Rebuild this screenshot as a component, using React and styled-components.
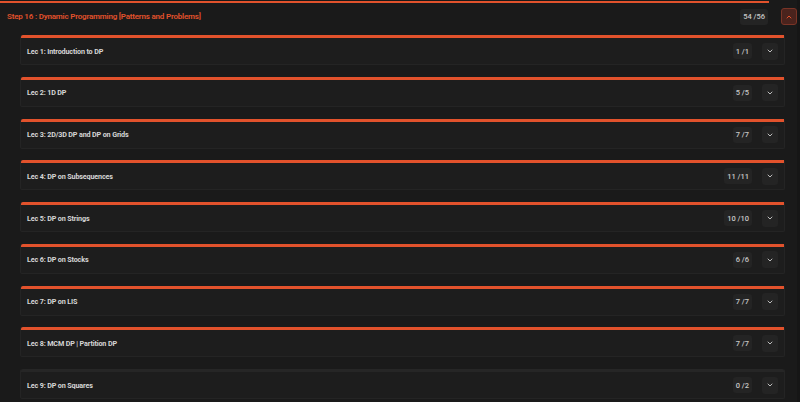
import React from "react";
import styled, { createGlobalStyle } from "styled-components";

const GlobalStyle = createGlobalStyle`
  html, body {
    margin: 0;
    padding: 0;
    background: #161616;
  }
  body {
    font-family: "Liberation Sans Narrow", "Roboto", sans-serif;
  }
`;

const ORANGE = "#e2522c";

const Section = styled.section`
  width: 797px;
  height: 402px;
  background: #1a1a1a;
  overflow: hidden;
`;

const Progress = styled.div`
  height: 3px;
  padding-top: 1px;
  box-sizing: border-box;
`;

const ProgressFill = styled.div`
  height: 2px;
  background: ${ORANGE};
`;

const Header = styled.div`
  display: flex;
  align-items: center;
  height: 27px;
  padding: 0 0 0 7px;
`;

const Title = styled.h2`
  flex: 1;
  margin: 0;
  font-size: 8px;
  font-weight: 600;
  color: ${ORANGE};
  letter-spacing: -0.2px;
`;

const Count = styled.span`
  display: inline-flex;
  align-items: center;
  justify-content: center;
  height: 16px;
  padding: 0 3px;
  border-radius: 3px;
  background: #242424;
  color: #c8c8c8;
  font-size: 7.5px;
  font-weight: 500;
`;

const Toggle = styled.button`
  display: inline-flex;
  align-items: center;
  justify-content: center;
  width: 16px;
  height: 17px;
  padding: 0;
  margin-left: ${(p) => p.$gap}px;
  border-radius: 3px;
  border: 1px solid ${(p) => (p.$open ? "#7a3426" : "transparent")};
  background: ${(p) => (p.$open ? "#4a231d" : "#242424")};
  color: ${(p) => (p.$open ? ORANGE : "#bdbdbd")};
`;

const List = styled.div`
  display: flex;
  flex-direction: column;
  gap: 11.75px;
  padding: 5px 12px 0 20px;
`;

const Card = styled.div`
  height: 30px;
  box-sizing: border-box;
  background: #1d1d1d;
  border: 1px solid #242424;
  border-top: none;
  border-radius: 2px;
  display: flex;
  flex-direction: column;
`;

const Bar = styled.div`
  height: 3px;
  background: #262626;
  border-radius: 2px 2px 0 0;
`;

const BarFill = styled.div`
  height: 100%;
  background: ${ORANGE};
  border-radius: 2px 0 0 0;
`;

const Row = styled.div`
  flex: 1;
  display: flex;
  align-items: center;
  padding: 0 6px 0 6px;
`;

const Name = styled.span`
  flex: 1;
  font-size: 7.2px;
  font-weight: 700;
  color: #d6d6d6;
  letter-spacing: -0.15px;
`;

const Chevron = ({ up }) => (
  <svg width="8" height="8" viewBox="0 0 24 24" fill="none" stroke="currentColor" strokeWidth="3" strokeLinecap="round" strokeLinejoin="round">
    <path d={up ? "M6 15l6-6 6 6" : "M6 9l6 6 6-6"} />
  </svg>
);

const lectures = [
  ["Lec 1: Introduction to DP", 1, 1],
  ["Lec 2: 1D DP", 5, 5],
  ["Lec 3: 2D/3D DP and DP on Grids", 7, 7],
  ["Lec 4: DP on Subsequences", 11, 11],
  ["Lec 5: DP on Strings", 10, 10],
  ["Lec 6: DP on Stocks", 6, 6],
  ["Lec 7: DP on LIS", 7, 7],
  ["Lec 8: MCM DP | Partition DP", 7, 7],
  ["Lec 9: DP on Squares", 0, 2],
];

export default function App() {
  return (
    <>
      <GlobalStyle />
      <Section>
        <Progress>
          <ProgressFill style={{ width: `${(54 / 56) * 100}%` }} />
        </Progress>
        <Header>
          <Title>Step 16 : Dynamic Programming [Patterns and Problems]</Title>
          <Count>54 /56</Count>
          <Toggle $open $gap={13}>
            <Chevron up />
          </Toggle>
        </Header>
        <List>
          {lectures.map(([name, done, total]) => (
            <Card key={name}>
              <Bar>
                <BarFill style={{ width: `${(done / total) * 100}%` }} />
              </Bar>
              <Row>
                <Name>{name}</Name>
                <Count>
                  {done} /{total}
                </Count>
                <Toggle $gap={10}>
                  <Chevron />
                </Toggle>
              </Row>
            </Card>
          ))}
        </List>
      </Section>
    </>
  );
}
